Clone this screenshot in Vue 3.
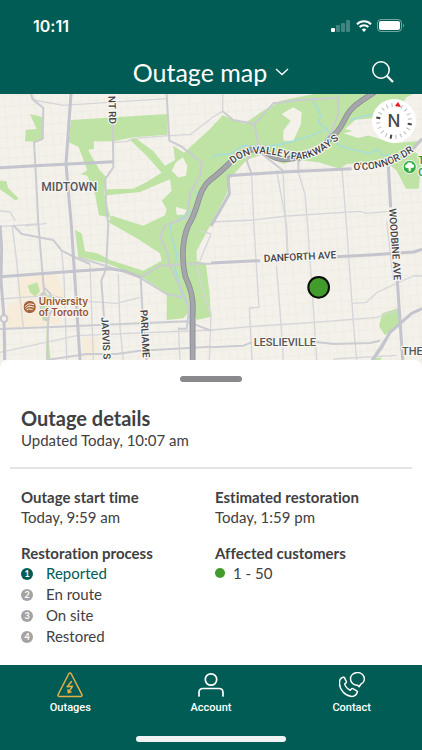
<template>
  <div class="app">
    <header class="header">
      <div class="status-bar">
        <span class="clock">10:11</span>
        <div class="status-icons">
          <svg width="20" height="14" viewBox="0 0 20 14" fill="#fff">
            <rect x="0" y="9" width="4" height="4" rx="1" />
            <rect x="5" y="6" width="4" height="7" rx="1" opacity="0.25" />
            <rect x="10" y="4" width="4" height="9" rx="1" opacity="0.25" />
            <rect x="15" y="1" width="4" height="12" rx="1" opacity="0.25" />
          </svg>
          <svg width="16" height="12" viewBox="0 0 16 12" fill="none" stroke="#fff" stroke-width="2">
            <path d="M1 4.2a10 10 0 0 1 14 0" />
            <path d="M3.6 7a6.300 6.300 0 0 1 8.800 0" />
            <path d="M8 12 5.700 9.500a3.300 3.300 0 0 1 4.600 0Z" fill="#fff" stroke="none" />
          </svg>
          <svg width="28" height="14" viewBox="0 0 28 14" fill="none">
            <rect x="0.5" y="0.5" width="24" height="12" rx="3.500" stroke="#fff" stroke-opacity="0.45" />
            <rect x="2" y="2" width="21" height="9" rx="2" fill="#fff" />
            <path d="M26 4.500v4c1.200-.5 1.200-3.500 0-4Z" fill="#fff" fill-opacity="0.5" />
          </svg>
        </div>
      </div>
      <div class="title-bar">
        <button class="title-button" type="button">
          <span>Outage map</span>
          <svg width="14" height="8" viewBox="0 0 14 8" fill="none" stroke="#fff" stroke-width="1.300">
            <path d="m1 1 6 5.500L13 1" />
          </svg>
        </button>
        <button class="search-button" type="button" aria-label="Search">
          <svg width="24" height="24" viewBox="0 0 24 24" fill="none" stroke="#fff">
            <circle cx="10" cy="10" r="8.200" stroke-width="1.500" />
            <path d="m16 16 6 6" stroke-width="2.200" />
          </svg>
        </button>
      </div>
    </header>

    <main class="content">
      <section class="map-area" aria-label="Outage map">
        <svg class="map" viewBox="0 0 1266 822" preserveAspectRatio="xMidYMin slice">
          <defs>
            <pattern id="blocks" width="46" height="62" patternUnits="userSpaceOnUse" patternTransform="rotate(-4)">
              <path d="M0 8h46M0 39h46M12 0v62M35 8v31" fill="none" stroke="#ebe7df" stroke-width="2" />
            </pattern>
            <path id="parkway-line" d="M698 210C740 176 780 170 850 190S965 182 1045 112" />
            <path id="oconnor-line" d="M1060 228C1130 230 1185 215 1255 162" />
          </defs>

          <rect width="1266" height="822" fill="#f4f1ea" />
          <rect width="1266" height="822" fill="url(#blocks)" />

          <g class="campus">
            <path d="M60 548 170 538 190 600 180 690 20 705 18 640 50 620Z" />
            <path d="M248 730 290 728 292 790 250 790Z" />
          </g>

          <g class="park">
            <path v-for="d in parks" :key="d" :d="d" />
          </g>
          <g class="clearing">
            <path v-for="d in clearings" :key="d" :d="d" />
          </g>
          <g class="water">
            <path v-for="d in water" :key="d" :d="d" />
          </g>
          <g class="street">
            <path v-for="d in streets" :key="d" :d="d" />
          </g>
          <g class="road">
            <path v-for="d in roads" :key="d" :d="d" />
          </g>
          <g class="avenue">
            <path v-for="d in avenues" :key="d" :d="d" />
          </g>
          <path class="highway-edge" :d="highway" />
          <path class="highway" :d="highway" />
          <circle cx="12" cy="674" r="10" fill="#f4f1ea" stroke="#c6c7cf" stroke-width="6" />

          <g class="road-label">
            <text><textPath href="#parkway-line">DON VALLEY PARKWAY S</textPath></text>
            <text><textPath href="#oconnor-line">O'CONNOR DR</textPath></text>
            <text transform="translate(792 504) rotate(-3)">DANFORTH AVE</text>
            <text transform="translate(1167 344) rotate(86)">WOODBINE AVE</text>
            <text transform="translate(421 648) rotate(87)">PARLIAME</text>
            <text transform="translate(304 670) rotate(87)">JARVIS S</text>
            <text transform="translate(325 6) rotate(88)">NT RD</text>
          </g>
          <g class="area-label">
            <text class="district" x="124" y="291">MIDTOWN</text>
            <text x="761" y="757">LESLIEVILLE</text>
            <text x="1206" y="783">THE</text>
          </g>

          <circle cx="89" cy="639" r="20" fill="#a9633a" stroke="#fff" stroke-width="3" />
          <path d="M76 638c10-13 17-7 26-6M77 644c10-12 16-6 25-4M80 648c9-6 12-2 18-1" fill="none" stroke="#fff" stroke-width="3" />
          <text class="place-label">
            <tspan x="116" y="634">University</tspan>
            <tspan x="116" y="666">of Toronto</tspan>
          </text>

          <circle cx="1229" cy="219" r="20" fill="#35ad42" stroke="#fff" stroke-width="3" />
          <path d="M1226 232v-9c-14 1-13-12-5-12 1-8 15-8 16 0 8 1 8 13-5 12v9Z" fill="#fff" />
          <g class="park-label">
            <text x="1255" y="210">T</text>
            <text x="1255" y="246">C</text>
          </g>

          <circle cx="956" cy="580" r="31" fill="#429c2b" stroke="#080b07" stroke-width="6" />
        </svg>

        <button class="compass" type="button" aria-label="Face north">
          <svg width="44" height="44" viewBox="0 0 44 44">
            <g stroke="#b9b9b9" stroke-width="1">
              <path v-for="a in ticks" :key="a" d="M22 4v4" :transform="`rotate(${a} 22 22)`" />
            </g>
            <g stroke="#444" stroke-width="2">
              <path v-for="a in [101, 191, 281]" :key="a" d="M22 4v4" :transform="`rotate(${a} 22 22)`" />
            </g>
            <path d="m26 3 3 5-6-1Z" fill="#f5141d" />
            <text x="22" y="28" text-anchor="middle">N</text>
          </svg>
        </button>
      </section>

      <section class="sheet">
        <button class="handle" type="button" aria-label="Resize details"></button>
        <div class="sheet-head">
          <h1>Outage details</h1>
          <p>Updated Today, 10:07 am</p>
        </div>
        <hr />
        <div class="details">
          <div>
            <h2>Outage start time</h2>
            <p>Today, 9:59 am</p>
          </div>
          <div>
            <h2>Estimated restoration</h2>
            <p>Today, 1:59 pm</p>
          </div>
          <div>
            <h2>Restoration process</h2>
            <ol class="steps">
              <li v-for="(step, i) in steps" :key="step" :class="{ active: i === currentStep }">
                <span class="step-number">{{ i + 1 }}</span>
                <span>{{ step }}</span>
              </li>
            </ol>
          </div>
          <div>
            <h2>Affected customers</h2>
            <p class="customers"><span class="dot"></span>1 - 50</p>
          </div>
        </div>
      </section>
    </main>

    <footer class="footer">
      <nav class="tabs">
        <a href="#outages" aria-current="page">
          <svg width="26" height="26" viewBox="0 0 26 26" fill="none" stroke="#e2ae47" stroke-width="1.500" stroke-linejoin="round">
            <path d="M11.700 2 1.200 22.300c-.6 1.200 0 2.200 1.300 2.200h21c1.300 0 1.900-1 1.300-2.200L14.300 2c-.6-1.200-2-1.200-2.600 0Z" />
            <path d="m14.500 9.500-4.300 5.300 5.300-.6-4 6.300M11 17.700l.3 3 2.900-.8" stroke-linecap="round" />
          </svg>
          <span>Outages</span>
        </a>
        <a href="#account">
          <svg width="26" height="26" viewBox="0 0 26 26" fill="none" stroke="#fff" stroke-width="1.700" stroke-linecap="round">
            <circle cx="13" cy="7.500" r="5.700" />
            <path d="M1 24v-3.500c0-2.500 1.500-4 4-4h16c2.500 0 4 1.500 4 4V24" />
          </svg>
          <span>Account</span>
        </a>
        <a href="#contact">
          <svg width="26" height="26" viewBox="0 0 26 26" fill="none" stroke="#fff" stroke-width="1.500" stroke-linejoin="round" stroke-linecap="round">
            <path d="M11.500 7a6.900 6.200 0 1 1 10.300 5.200l-1.800 2.600-1.400-1.600A6.900 6.200 0 0 1 11.500 7Z" />
            <path d="m2.600 5.900 1.500-.6c.7-.2 1.200 0 1.500.6l1.700 3.600c.3.600.1 1.100-.4 1.500l-1.200.9c.8 2.900 2.800 5.100 5.500 6.300l1.100-1.300c.4-.5.900-.6 1.500-.3l4 2.200c.6.300.8.900.5 1.500-1.200 3.200-3.700 4.500-6.600 4C5.800 23.500.9 17.800.5 11.700c-.2-2.600.3-4.700 2.100-5.800Z" />
          </svg>
          <span>Contact</span>
        </a>
      </nav>
      <div class="home-indicator"></div>
    </footer>
  </div>
</template>

<script setup>
import { ref } from 'vue'

const steps = ['Reported', 'En route', 'On site', 'Restored']
const currentStep = ref(0)

const ticks = Array.from({ length: 20 }, (_, i) => i * 18 + 11)

// map shapes, three units to a pixel at phone width
const parks = [
  'M90 60 130 70 132 135 105 143 75 142 77 107 110 105Z',
  'M213 78 502 60 503 122 400 130 340 142 281 142 282 164 264 168 300 230 318 248 313 300 330 365 335 372 297 364 285 300 262 245 243 241 262 229 236 159 205 144Z',
  'M320 286 400 284 440 264 485 236 440 185 388 136 410 134 460 172 495 215 525 198 520 156 552 176 633 102 668 64 733 89 783 54 848 19 943 0 1130 0 1085 60 1035 105 1110 126 1180 148 1266 140 1240 170 1266 190 1256 284 1218 284 1190 230 1160 205 1040 210 1020 224 955 205 890 197 850 210 790 180 740 197 690 254 680 300 630 395 590 470 590 500 618 510 628 593 633 668 590 678 575 645 550 673 500 678 500 598 430 553 320 508 235 488 225 408 245 418 255 472 292 478 330 498 430 530 485 500 480 478 410 433 325 384 335 365 430 395 495 364 500 345 485 320 515 290 510 256 420 294 320 304Z',
  'M1130 0 1085 50 1060 78 1150 70 1180 60 1220 10 1240 0Z',
  'M0 260 20 262 24 282 55 312 48 320 0 286Z',
  'M83 575 112 565 120 592 105 608 90 595Z',
  'M115 610 132 592 150 610 148 680 128 680Z',
  'M140 690 152 798 138 798Z',
  'M1137 696 1147 658 1196 642 1200 690 1155 724Z',
  'M1110 796 1145 790 1140 800Z'
]

const clearings = [
  'M515 230 527 206 548 190 562 215 558 246 535 250Z',
  'M527 338 560 348 552 362 530 362Z',
  'M850 110 872 80 845 60 880 40 905 55 903 90 880 140 850 140Z',
  'M1030 118 1105 100 1120 120 1075 132Z'
]

const water = [
  'M633 194 648 183 690 180 730 155 790 157 850 150 920 130 980 105',
  'M940 20 962 65 955 85 980 105 990 120',
  'M985 130 1030 160 1110 178 1135 165 1145 184 1220 184',
  'M585 290 600 320 570 355 510 393 515 430 530 480 525 520 545 600 568 640 572 798',
  'M1050 78 1100 64 1160 60'
]

const streets = [
  'M95 0 102 18 190 34 500 14', 'M340 145 380 143 400 133 505 125 572 121 633 74',
  'M0 351 30 354 46 380', 'M0 398 110 390', 'M75 396 140 388',
  'M36 394 50 500 58 590 70 700', 'M185 470 192 545 200 798', 'M270 510 280 798', 'M355 540 360 700 370 798',
  'M0 615 150 604 230 620 350 628 420 610', 'M0 775 230 725 633 708',
  'M535 700 540 798', 'M600 410 633 420 600 500', 'M590 510 600 560 618 620 633 660 628 798',
  'M755 245 762 400 777 640 748 642 756 798', 'M830 230 860 395 864 485',
  'M849 234 863 500', 'M829 514 843 690 850 798', 'M895 236 915 300 923 395 943 685 950 798',
  'M1026 225 1040 400 1060 685 1070 798', 'M633 384 760 378 860 366 1080 352 1100 358 1170 352',
  'M633 708 760 697 943 685 1130 670 1190 650', 'M1056 628 1100 625 1130 596 1185 570 1240 546 1266 546',
  'M668 0 668 52 633 72', 'M1160 380 1180 560', 'M1000 795 1190 784'
]

const roads = [
  'M93 0 97 15 130 42 127 135 102 145 108 250 115 390 132 590 145 650 142 798',
  'M338 80 340 220 316 255 319 350 325 390 318 525 304 560 312 670',
  'M500 0 508 140 545 158 605 205 600 245 570 300 562 370 495 395 480 430 500 470 512 520 550 600 568 640',
  'M40 394 65 420 160 438 185 470 235 495 270 510', 'M235 490 410 545 500 600 545 610',
  'M422 550 430 700 440 798', 'M132 594 120 605 122 640 140 680 155 650 152 600 132 580',
  'M422 550 480 515 590 508 633 510', 'M633 760 730 755 755 745', 'M933 742 1000 750 1110 747 1140 740',
  'M668 52 700 78 763 90 775 150 740 200 755 240', 'M783 178 850 230', 'M763 90 820 28 900 18 1010 12',
  'M895 236 895 202 960 170 1000 100 1015 60 1015 0', 'M568 640 560 704 535 704', 'M1115 798 1170 715',
  'M0 705 140 700 230 696 420 688 560 682 633 710', 'M140 798 260 780 350 780 420 770 633 758'
]

const avenues = [
  'M0 221 105 215 340 203',
  'M0 548 160 536 330 524 370 530 422 550',
  'M213 0 198 210 214 394 225 560 240 798',
  'M0 394 5 460 3 560 12 670 14 798',
  'M633 396 688 300 684 245 850 234 1055 224',
  'M633 507 780 500M1010 488 1120 482 1240 474 1266 466',
  'M1165 215 1172 340M1192 560 1200 680 1208 798',
  'M1266 644 1235 658 1170 715 1145 760 1118 798',
  'M1225 180 1266 134'
]

const highway = 'M1130-10 1085 20C1030 55 1037 90 1005 120S950 185 875 194 810 162 760 166 690 215 633 256C590 290 600 340 565 394 545 440 545 500 556 548 580 600 580 630 578 670V822'
</script>

<style>
body {
  margin: 0;
  background: #005c54;
}
</style>

<style scoped>
.app {
  min-height: 100vh;
  display: flex;
  flex-direction: column;
  color: #3f4042;
  font-family: Lato, "Open Sans", sans-serif;
  font-size: 15px;
  font-variant-ligatures: none;
  line-height: 20px;
}

button {
  padding: 0;
  border: 0;
  background: none;
  color: inherit;
  font: inherit;
  cursor: pointer;
}

h1,
h2,
p,
ol {
  margin: 0;
  padding: 0;
}

.header,
.footer {
  background: #005c54;
  color: #fff;
}

.status-bar {
  display: flex;
  justify-content: space-between;
  align-items: center;
  height: 52px;
  padding: 0 17px 0 33px;
}

.clock {
  font-family: Inter, sans-serif;
  font-size: 16px;
  font-weight: 600;
}

.status-icons {
  display: flex;
  align-items: center;
  gap: 5px;
}

.title-bar {
  display: grid;
  grid-template-columns: 1fr auto 1fr;
  align-items: center;
  height: 40px;
  padding: 0 27px 2px;
}

.title-button {
  grid-column: 2;
  display: flex;
  align-items: center;
  gap: 8px;
  font-size: 25px;
  line-height: 32px;
}

.search-button {
  justify-self: end;
  height: 24px;
}

.content {
  flex: 1;
  display: flex;
  flex-direction: column;
}

.map-area {
  flex: 1 0 266px;
  display: flex;
  position: relative;
  margin-bottom: -8px;
}

.map {
  flex: 1;
  width: 100%;
  height: auto;
  min-height: 274px;
  max-height: 60vh;
  font-family: Roboto, sans-serif;
}

.park { fill: #bee3a4; }
.clearing { fill: #f4f1ea; }
.campus { fill: #f7ebd9; }
.water,
.street,
.road,
.avenue,
.highway,
.highway-edge {
  fill: none;
  stroke-linejoin: round;
}
.water { stroke: #a5dce0; stroke-width: 4; }
.street { stroke: #d6d6da; stroke-width: 4; }
.road { stroke: #cbccd2; stroke-width: 6; }
.avenue { stroke: #c3c4cd; stroke-width: 9; }
.highway-edge { stroke: #8c8e94; stroke-width: 17; }
.highway { stroke: #a4a6ab; stroke-width: 12; }

.map text {
  paint-order: stroke;
  stroke: #f8f6f1;
  stroke-width: 7px;
  stroke-linejoin: round;
}

.road-label {
  fill: #424247;
  font-size: 30px;
  font-weight: 500;
}

.area-label {
  fill: #55565a;
  font-size: 33px;
  font-weight: 500;
}

.area-label .district {
  font-size: 36px;
}

.place-label {
  fill: #97532e;
  font-family: Inter, sans-serif;
  font-size: 30px;
  font-weight: 600;
}

.park-label {
  fill: #2b9a3a;
  font-size: 30px;
  font-weight: 600;
}

.compass {
  position: absolute;
  top: 5px;
  right: 6px;
  width: 44px;
  height: 44px;
  border-radius: 50%;
  background: #fff;
}

.compass svg {
  display: block;
}

.compass text {
  fill: #47484a;
  font-family: Inter, sans-serif;
  font-size: 17px;
  font-weight: 500;
}

.sheet {
  position: relative;
  display: flex;
  flex-direction: column;
  border-radius: 8px 8px 0 0;
  background: #fff;
  padding: 16px 10px 18px;
}

.handle {
  align-self: center;
  width: 62px;
  height: 6px;
  border-radius: 3px;
  background: #89888d;
}

.sheet-head {
  padding: 24px 11px 17px;
}

h1 {
  font-size: 20px;
  line-height: 24px;
}

h2 {
  font-size: 15px;
  line-height: 20px;
}

hr {
  width: 100%;
  height: 2px;
  margin: 0;
  border: 0;
  background: #e4e4e5;
}

.details {
  display: grid;
  grid-template-columns: 1fr 1fr;
  gap: 16px 5px;
  padding: 18px 8px 0 11px;
}

.steps {
  list-style: none;
}

.steps li {
  display: flex;
  align-items: center;
  gap: 13px;
  line-height: 21px;
}

.steps .active {
  color: #005c54;
}

.step-number {
  width: 12px;
  height: 12px;
  border-radius: 50%;
  background: #a3a3a4;
  color: #fff;
  font-size: 9px;
  font-weight: 700;
  line-height: 12px;
  text-align: center;
}

.active .step-number {
  background: #005c54;
}

.customers {
  display: flex;
  align-items: center;
  gap: 8px;
}

.dot {
  width: 10px;
  height: 10px;
  border-radius: 50%;
  background: #429c2b;
}

.footer {
  display: flex;
  flex-direction: column;
  align-items: center;
  gap: 21px;
  padding: 7px 0 8px;
}

.tabs {
  align-self: stretch;
  display: grid;
  grid-template-columns: repeat(3, 1fr);
}

.tabs a {
  display: flex;
  flex-direction: column;
  align-items: center;
  gap: 3px;
  color: #fff;
  font-family: Roboto, sans-serif;
  font-size: 11px;
  font-weight: 500;
  line-height: 14px;
  text-decoration: none;
}

.home-indicator {
  width: 150px;
  height: 6px;
  border-radius: 3px;
  background: #f0f4f4;
}
</style>
